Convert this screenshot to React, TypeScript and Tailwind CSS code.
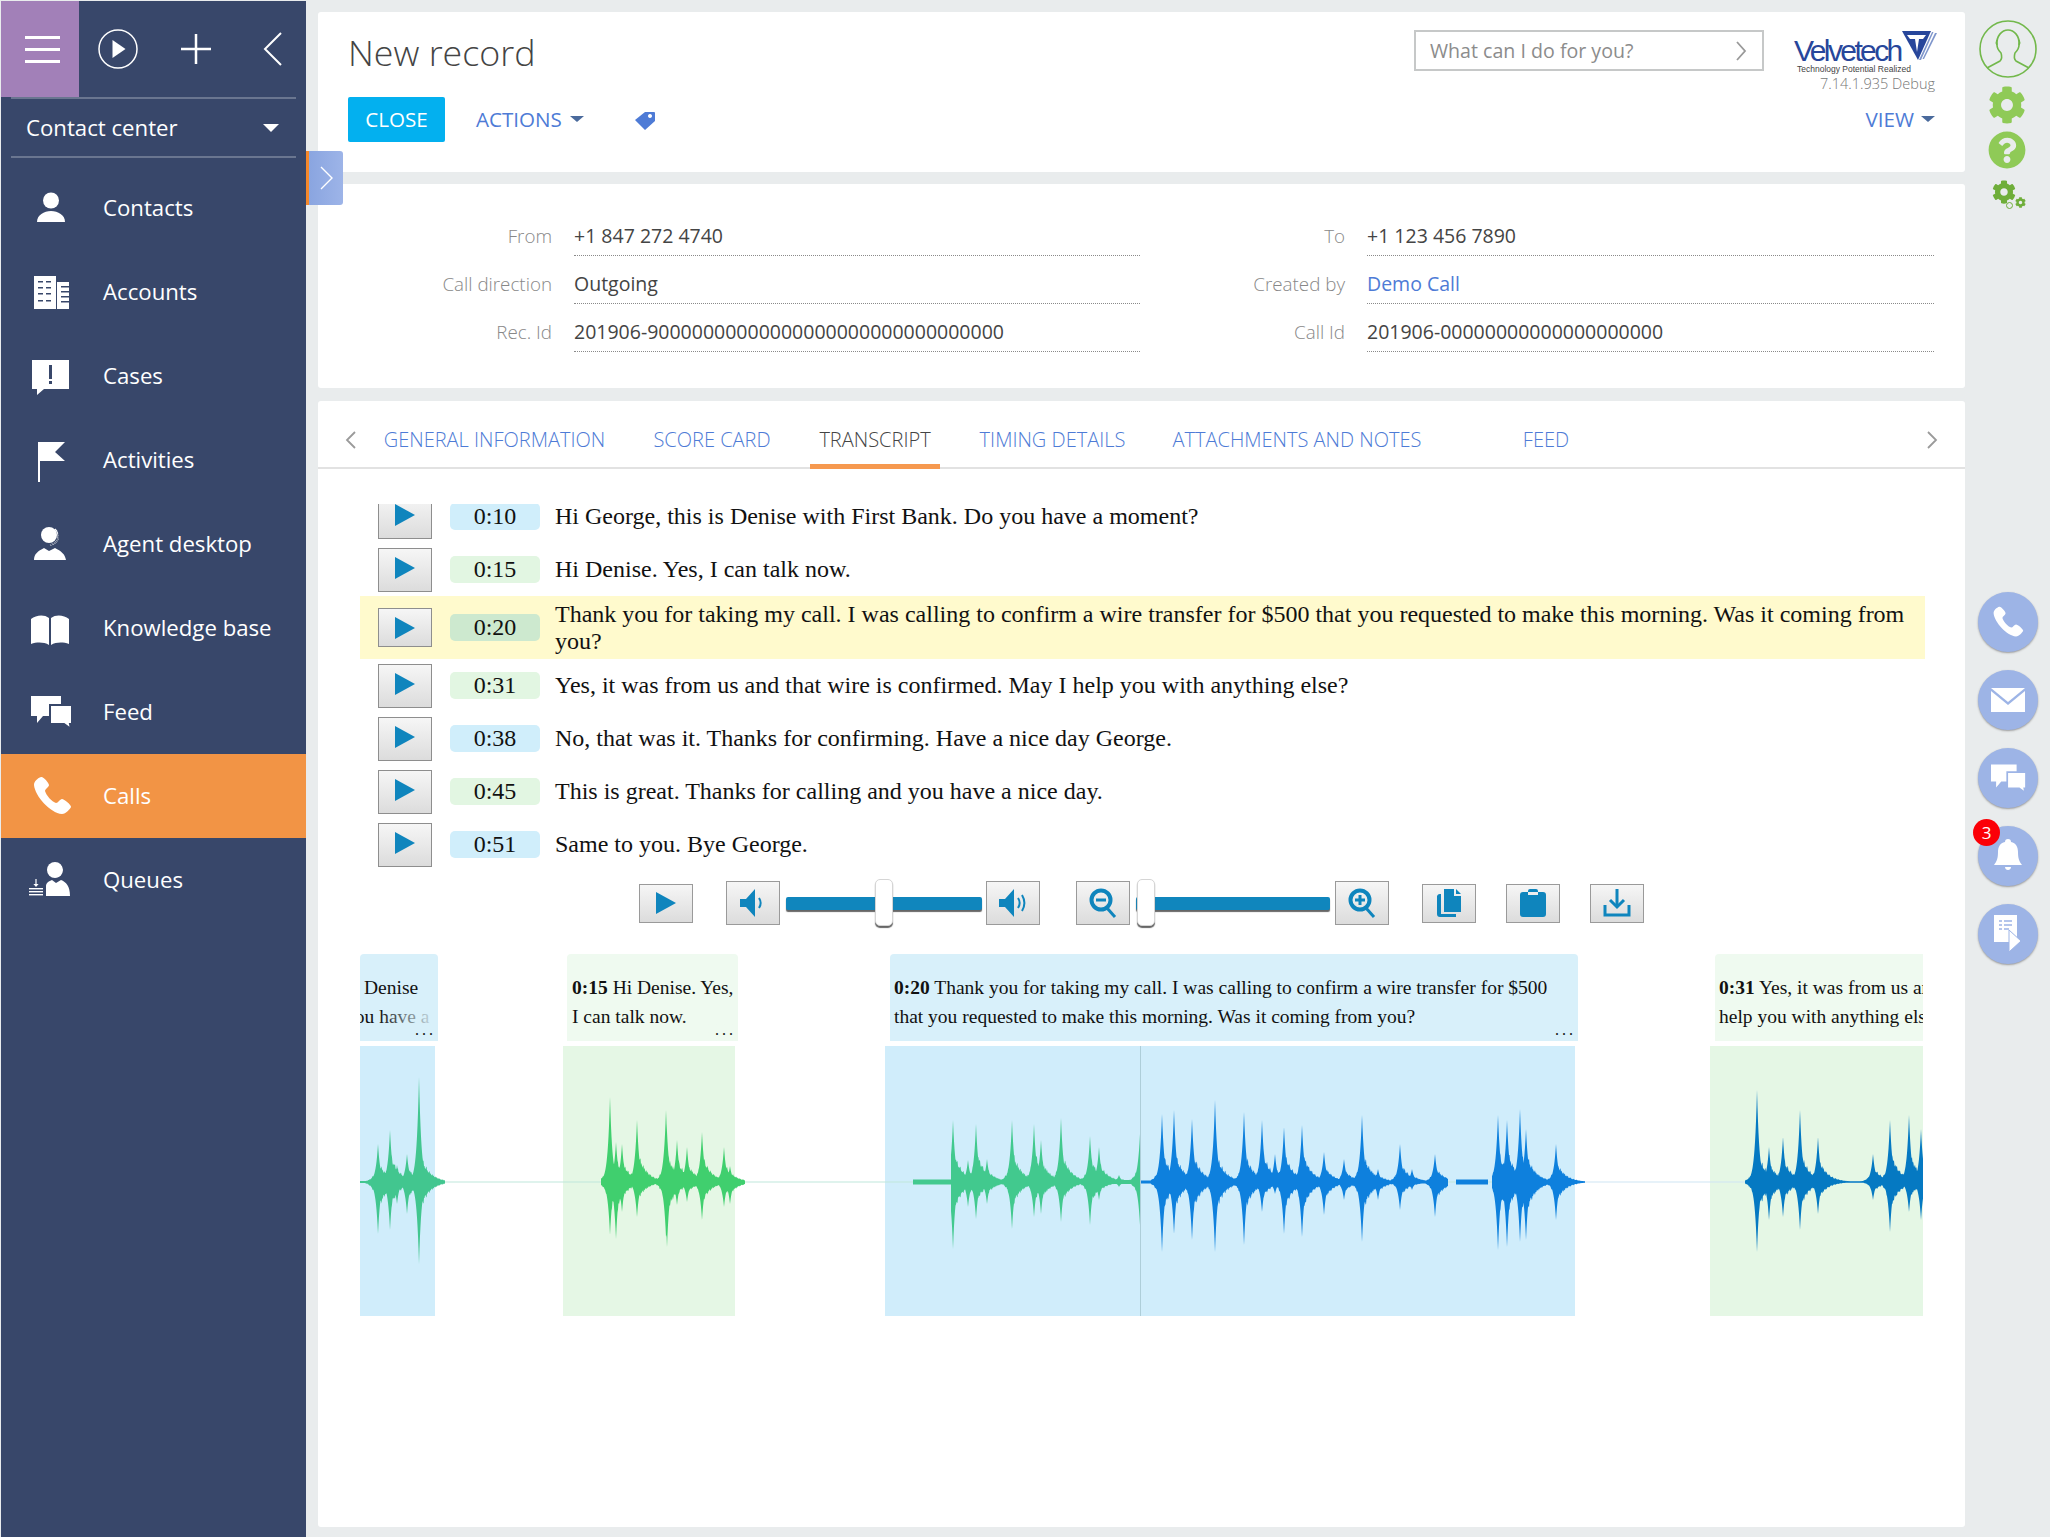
import React from "react";
import { FaCog, FaQuestionCircle } from "react-icons/fa";

type Peak = [number, number, number];

type WaveSegment = {
    from: number;
    to: number;
    color: string;
    floor: number;
    peaks: Peak[];
};

// center line of the wave on the page
const MID = 1182;

const waveSegments: WaveSegment[] = [
    {
        from: 360,
        to: 445,
        color: "#42c68f",
        floor: 1,
        peaks: [
            [378, 38, 52],
            [390, 52, 48],
            [397, 17, 22],
            [407, 28, 32],
            [419, 105, 82],
            [430, 8, 8],
        ],
    },
    {
        from: 601,
        to: 745,
        color: "#40cf6e",
        floor: 0.8,
        peaks: [
            [610, 85, 53],
            [616, 40, 57],
            [622, 38, 30],
            [637, 62, 35],
            [666, 72, 55],
            [667, 50, 65],
            [677, 42, 23],
            [687, 35, 20],
            [702, 50, 38],
            [724, 35, 25],
            [730, 16, 22],
        ],
    },
    { from: 913, to: 951, color: "#42c98e", floor: 2.5, peaks: [] },
    {
        from: 951,
        to: 1140,
        color: "#42c98e",
        floor: 2,
        peaks: [
            [953, 62, 67],
            [968, 22, 25],
            [976, 58, 37],
            [987, 23, 22],
            [1012, 62, 47],
            [1034, 58, 35],
            [1041, 42, 32],
            [1061, 64, 40],
            [1090, 46, 43],
            [1099, 35, 18],
            [1119, 7, 5],
            [1140, 48, 43],
        ],
    },
    {
        from: 1140,
        to: 1448,
        color: "#0e80dd",
        floor: 1.5,
        peaks: [
            [1162, 68, 70],
            [1174, 72, 52],
            [1192, 63, 58],
            [1215, 82, 70],
            [1244, 70, 63],
            [1262, 62, 30],
            [1275, 28, 12],
            [1284, 55, 52],
            [1302, 57, 55],
            [1324, 30, 33],
            [1344, 23, 18],
            [1362, 67, 60],
            [1378, 13, 18],
            [1400, 38, 28],
            [1412, 13, 8],
            [1435, 28, 35],
        ],
    },
    { from: 1456, to: 1488, color: "#0e80dd", floor: 2.5, peaks: [] },
    {
        from: 1492,
        to: 1585,
        color: "#0e80dd",
        floor: 0.8,
        peaks: [
            [1498, 67, 68],
            [1507, 62, 65],
            [1520, 73, 60],
            [1526, 53, 58],
            [1556, 38, 38],
        ],
    },
    {
        from: 1745,
        to: 1923,
        color: "#0579c2",
        floor: 0.8,
        peaks: [
            [1757, 92, 70],
            [1769, 35, 38],
            [1783, 45, 35],
            [1800, 72, 48],
            [1818, 45, 32],
            [1873, 28, 18],
            [1890, 62, 50],
            [1909, 67, 30],
            [1921, 53, 38],
        ],
    },
];

const wavePoints = (segment: WaveSegment) => {
    const upper: string[] = [];
    const lower: string[] = [];
    for (let x = segment.from; x <= segment.to; x += 0.5) {
        let up = segment.floor;
        let down = segment.floor;
        const noise = 0.72 + 0.28 * Math.abs(Math.sin(x * 5.3) * Math.cos(x * 2.1));
        for (const [px, peakUp, peakDown] of segment.peaks) {
            const d = Math.abs(x - px);
            const spike = Math.exp(-d / 2.4);
            const body = Math.exp(-d / (x < px ? 4 : 9));
            up = Math.max(up, peakUp * spike, Math.min(peakUp * 0.62, 36) * body * noise);
            down = Math.max(down, peakDown * spike, Math.min(peakDown * 0.62, 36) * body * noise);
        }
        upper.push(`${x},${(MID - up).toFixed(1)}`);
        lower.unshift(`${x},${(MID + down).toFixed(1)}`);
    }
    return [...upper, ...lower].join(" ");
};

const Waveform = () => (
    <svg
        className="absolute left-0 top-0"
        width="1563"
        height="270"
        viewBox="360 1046 1563 270"
    >
        <rect x="360" y="1181.5" width="1215" height="1" fill="#bfe8dc" />
        <rect x="1575" y="1181.5" width="348" height="1" fill="#cfe6f3" />
        {waveSegments.map((segment) => (
            <polygon
                key={segment.from}
                points={wavePoints(segment)}
                fill={segment.color}
            />
        ))}
        <rect x="1140" y="1046" width="1" height="270" fill="#aeced9" />
    </svg>
);

const PhoneIcon = ({ className }: { className?: string }) => (
    <svg className={className} viewBox="0 0 40 40" fill="#fff">
        <path d="M9 1C6 2 2 5 2 9c1 11 16 28 28 29 4 0 8-5 9-7 .5-2-7-8-9-8s-4 4-6 4c-4-1-10-8-11-12 0-2 4-4 4-6S11 0 9 1z" />
    </svg>
);

const ChatIcon = ({
    className,
    gap,
}: {
    className?: string;
    gap: string;
}) => (
    <svg className={className} viewBox="0 0 41 33" fill="#fff">
        <path d="M0 0h30v20H12l-6 7v-7H0z" />
        <path
            d="M19 9h22v19h-2l1 5-7-5H19z"
            stroke={gap}
            strokeWidth="2"
        />
    </svg>
);

const SIDE = "#38476a";

const ContactsIcon = () => (
    <svg className="h-[44px] w-[44px]" viewBox="0 0 44 44" fill="#fff">
        <circle cx="23" cy="14.5" r="8" />
        <path d="M9 36c0-7 7-11 14-11s14 4 14 11z" />
    </svg>
);

const AccountsIcon = () => (
    <svg className="h-[44px] w-[44px]" viewBox="0 0 44 44" fill="#fff">
        <rect x="6" y="6" width="22" height="33" />
        <rect x="29" y="12" width="12" height="27" />
        <g fill={SIDE}>
            <rect x="10" y="11" width="5" height="1.5" />
            <rect x="18" y="11" width="5" height="1.5" />
            <rect x="10" y="17" width="5" height="1.5" />
            <rect x="18" y="17" width="5" height="1.5" />
            <rect x="10" y="23" width="5" height="1.5" />
            <rect x="18" y="23" width="5" height="1.5" />
            <rect x="10" y="30" width="5" height="1.5" />
            <rect x="18" y="30" width="5" height="1.5" />
            <rect x="33" y="16" width="8" height="1.5" />
            <rect x="33" y="21" width="8" height="1.5" />
            <rect x="33" y="26" width="8" height="1.5" />
            <rect x="33" y="31" width="8" height="1.5" />
        </g>
    </svg>
);

const CasesIcon = () => (
    <svg className="h-[44px] w-[44px]" viewBox="0 0 44 44" fill="#fff">
        <path d="M4 6h37v29H16l-7 6v-6H4z" />
        <rect x="21" y="11" width="3" height="14" fill={SIDE} />
        <rect x="21" y="27" width="3" height="3" fill={SIDE} />
    </svg>
);

const ActivitiesIcon = () => (
    <svg className="h-[44px] w-[44px]" viewBox="0 0 44 44" fill="#fff">
        <rect x="10" y="4" width="2" height="40" />
        <path d="M10 4h27l-10 10 10 9H10z" />
    </svg>
);

const AgentIcon = () => (
    <svg className="h-[44px] w-[44px]" viewBox="0 0 44 44" fill="#fff">
        <circle cx="21" cy="13" r="8" />
        <path d="M6 38c0-6 4-9 10-12l5 3 6-3c6 3 10 6 11 12z" />
        <path
            d="M27 7c3 3 4 6 3 10-1 3-4 5-8 6"
            fill="none"
            stroke="#fff"
            strokeWidth="1.3"
        />
        <path
            d="M30 9c1 3 1 6 0 8-1 3-4 5-8 6"
            fill="none"
            stroke={SIDE}
            strokeWidth="1"
        />
    </svg>
);

const BookIcon = () => (
    <svg className="h-[44px] w-[44px]" viewBox="0 0 44 44" fill="#fff">
        <path d="M3 13c5-4 13-5 18-1v27c-5-3-12-3-18-1z" />
        <path d="M23 12c5-4 13-3 18 1v25c-6-2-13-2-18 1z" />
    </svg>
);

const QueuesIcon = () => (
    <svg className="h-[44px] w-[44px]" viewBox="0 0 44 44" fill="#fff">
        <circle cx="27" cy="12" r="8" />
        <path d="M18 38V28c0-3 3-5 6-6l4 3 5-3c5 2 9 6 9 16z" />
        <path
            d="M33 6c3 3 3 7 2 10-1 3-4 4-8 5"
            fill="none"
            stroke={SIDE}
            strokeWidth="1"
        />
        <rect x="1" y="30" width="14" height="1.4" />
        <rect x="1" y="33" width="14" height="1.4" />
        <rect x="1" y="36" width="14" height="1.4" />
        <path d="M7.4 21h1.2v5h2l-2.6 3-2.6-3h2z" />
    </svg>
);

const menuItems = [
    { label: "Contacts", icon: <ContactsIcon /> },
    { label: "Accounts", icon: <AccountsIcon /> },
    { label: "Cases", icon: <CasesIcon /> },
    { label: "Activities", icon: <ActivitiesIcon /> },
    { label: "Agent desktop", icon: <AgentIcon /> },
    { label: "Knowledge base", icon: <BookIcon /> },
    {
        label: "Feed",
        icon: (
            <div className="flex h-[44px] w-[44px] items-center pl-[3px]">
                <ChatIcon className="h-[33px] w-[41px]" gap={SIDE} />
            </div>
        ),
    },
    {
        label: "Calls",
        active: true,
        icon: (
            <div className="flex h-[44px] w-[44px] items-center pl-[4px]">
                <PhoneIcon className="h-[40px] w-[40px]" />
            </div>
        ),
    },
    { label: "Queues", icon: <QueuesIcon /> },
];

const Sidebar = () => (
    <div className="ml-[1px] mt-[1px] flex w-[305px] shrink-0 flex-col bg-[#38476a]">
        <div className="flex h-[96px] items-center">
            <div className="flex h-[96px] w-[78px] flex-col items-center justify-center gap-[9px] bg-[#a280b8] pl-[4px]">
                <div className="h-[3px] w-[35px] bg-white" />
                <div className="h-[3px] w-[35px] bg-white" />
                <div className="h-[3px] w-[35px] bg-white" />
            </div>
            <svg className="ml-[19px] h-[40px] w-[40px]" viewBox="0 0 40 40">
                <circle cx="20" cy="20" r="19" fill="none" stroke="#fff" strokeWidth="1.5" />
                <path d="M14.5 11l13 9-13 9z" fill="#fff" />
            </svg>
            <svg className="ml-[42px] h-[32px] w-[32px]" viewBox="0 0 32 32">
                <path d="M16 1v30M1 16h30" stroke="#fff" strokeWidth="2.5" />
            </svg>
            <svg className="ml-[51px] h-[34px] w-[20px]" viewBox="0 0 20 34">
                <path d="M18 1L2 17l16 16" fill="none" stroke="#fff" strokeWidth="2" />
            </svg>
        </div>
        <div className="mx-[10px] flex h-[61px] items-center justify-between border-y-2 border-[#6a7690] pl-[15px] pr-[17px] font-['Open_Sans',sans-serif] text-[22.2px] text-white">
            <span>Contact center</span>
            <span className="h-0 w-0 border-x-[8.5px] border-t-[8px] border-x-transparent border-t-white" />
        </div>
        <div className="mt-[8px] flex flex-col">
            {menuItems.map((item) => (
                <div
                    key={item.label}
                    className={`flex h-[84px] items-center pl-[27px] font-['Open_Sans',sans-serif] text-[22.2px] text-white ${item.active ? "bg-[#f29445]" : ""}`}
                >
                    <div className="w-[75px]">{item.icon}</div>
                    {item.label}
                </div>
            ))}
        </div>
    </div>
);

const Caret = () => (
    <span className="h-0 w-0 border-x-[7px] border-t-[6px] border-x-transparent border-t-[#4a6a9c]" />
);

const Logo = () => (
    <div className="ml-[30px] flex w-[143px] flex-col items-end pt-[23px]">
        <div className="flex h-[30px] w-full items-center">
            <span className="font-['Liberation_Sans',sans-serif] text-[30px] tracking-[-2.6px] text-[#27469b]">
                Velvetech
            </span>
            <svg className="-mt-[8px] ml-auto h-[30px] w-[35px]" viewBox="0 0 35 30">
                <path d="M0 0h29L16 29z" fill="#27469b" />
                <path d="M5 4h19l-3 4h-4l-2 13-2-13H8z" fill="#fff" />
                <path d="M30 1h1.5L19 29h-2zM33 2h2L22 28h-1.5z" fill="#7f96cc" />
            </svg>
        </div>
        <div className="w-full whitespace-nowrap pl-[3px] font-['Liberation_Sans',sans-serif] text-[8.5px] leading-[9px] text-[#444]">
            Technology Potential Realized
        </div>
        <div className="whitespace-nowrap pr-[2px] font-['Open_Sans',sans-serif] text-[14.5px] font-light leading-[19px] text-[#777]">
            7.14.1.935 Debug
        </div>
    </div>
);

const HeaderCard = () => (
    <div className="mt-[12px] h-[160px] rounded-[3px] bg-white font-['Open_Sans',sans-serif]">
        <div className="flex h-[85px] justify-between pr-[28px]">
            <div className="pl-[30px] pt-[14px] text-[35.8px] font-light leading-[52px] text-[#444]">
                New record
            </div>
            <div className="flex">
                <div className="mt-[18px] flex h-[41px] w-[350px] items-center justify-between border-2 border-[#c6c8c8] pl-[14px] pr-[15px] text-[19.6px] text-[#8c8c8c]">
                    What can I do for you?
                    <svg className="h-[20px] w-[12px]" viewBox="0 0 12 20">
                        <path d="M2 1l8 9-8 9" fill="none" stroke="#999" strokeWidth="1.8" />
                    </svg>
                </div>
                <Logo />
            </div>
        </div>
        <div className="flex h-[45px] items-center pl-[30px] pr-[30px] text-[20.6px] text-[#4e7bd6]">
            <div className="flex h-[45px] w-[97px] items-center justify-center rounded-[2px] bg-[#03b0ef] text-white">
                CLOSE
            </div>
            <div className="ml-[31px] flex items-center gap-[8px]">
                ACTIONS
                <Caret />
            </div>
            <svg className="ml-[51px] h-[20px] w-[20px]" viewBox="0 0 20 20" fill="#4e7bd6">
                <path
                    fillRule="evenodd"
                    d="M10 2h9a1 1 0 0 1 1 1v8L10 20 0 10zM15 4a2 2 0 1 0 .01 0z"
                />
            </svg>
            <div className="ml-auto flex items-center gap-[7px]">
                VIEW
                <Caret />
            </div>
        </div>
    </div>
);

const Field = ({
    label,
    value,
    link,
    labelWidth,
    right,
}: {
    label: string;
    value: string;
    link?: boolean;
    labelWidth: string;
    right?: boolean;
}) => (
    <div className="flex h-[48px]">
        <div className={`${labelWidth} flex h-[44px] items-center justify-end pt-[5px] text-[18.8px] font-light text-[#888]`}>
            {label}
        </div>
        <div
            className={`ml-[22px] flex h-[44px] flex-1 items-center border-b border-dotted border-[#8a8a8a] pt-[5px] text-[19.5px] ${link ? "text-[#4e7bd6]" : "text-[#444]"} ${right ? "mr-[31px]" : ""}`}
        >
            {value}
        </div>
    </div>
);

const DetailsCard = () => (
    <div className="mt-[12px] grid h-[204px] grid-cols-[822px_1fr] rounded-[3px] bg-white pt-[28px] font-['Open_Sans',sans-serif]">
        <div>
            <Field label="From" value="+1 847 272 4740" labelWidth="w-[234px]" />
            <Field label="Call direction" value="Outgoing" labelWidth="w-[234px]" />
            <Field
                label="Rec. Id"
                value="201906-90000000000000000000000000000000"
                labelWidth="w-[234px]"
            />
        </div>
        <div>
            <Field label="To" value="+1 123 456 7890" labelWidth="w-[205px]" right />
            <Field label="Created by" value="Demo Call" link labelWidth="w-[205px]" right />
            <Field
                label="Call Id"
                value="201906-00000000000000000000"
                labelWidth="w-[205px]"
                right
            />
        </div>
    </div>
);

const tabs = [
    { label: "GENERAL INFORMATION", width: "w-[239px]" },
    { label: "SCORE CARD", width: "w-[196px]" },
    { label: "TRANSCRIPT", width: "w-[130px]", active: true },
    { label: "TIMING DETAILS", width: "w-[225px]" },
    { label: "ATTACHMENTS AND NOTES", width: "w-[264px]" },
    { label: "FEED", width: "w-[234px]" },
];

const TabBar = () => (
    <div className="flex h-[68px] items-stretch border-b-2 border-[#e2e2e2] pl-[27px] pr-[27px] font-['Open_Sans',sans-serif] text-[20px] font-light">
        <div className="flex w-[30px] items-center">
            <svg className="mt-[12px] h-[18px] w-[12px]" viewBox="0 0 12 18">
                <path d="M10 1L2 9l8 8" fill="none" stroke="#9a9a9a" strokeWidth="1.8" />
            </svg>
        </div>
        {tabs.map((tab) => (
            <div
                key={tab.label}
                className={`${tab.width} -mb-[2px] flex shrink-0 items-center justify-center whitespace-nowrap border-b-[5px] pt-[14px] ${tab.active ? "border-[#f6994f] text-[#444]" : "border-transparent text-[#4e7bd6]"}`}
            >
                {tab.label}
            </div>
        ))}
        <div className="ml-auto flex items-center">
            <svg className="mt-[12px] h-[18px] w-[12px]" viewBox="0 0 12 18">
                <path d="M2 1l8 8-8 8" fill="none" stroke="#9a9a9a" strokeWidth="1.8" />
            </svg>
        </div>
    </div>
);

const PlayTriangle = () => (
    <svg className="h-[22px] w-[20px]" viewBox="0 0 20 22">
        <path d="M0 0l20 11L0 22z" fill="#0f85bd" />
    </svg>
);

const transcript = [
    { time: "0:10", kind: "blue", text: "Hi George, this is Denise with First Bank. Do you have a moment?" },
    { time: "0:15", kind: "green", text: "Hi Denise. Yes, I can talk now." },
    {
        time: "0:20",
        kind: "current",
        text: "Thank you for taking my call. I was calling to confirm a wire transfer for $500 that you requested to make this morning. Was it coming from you?",
    },
    { time: "0:31", kind: "green", text: "Yes, it was from us and that wire is confirmed. May I help you with anything else?" },
    { time: "0:38", kind: "blue", text: "No, that was it. Thanks for confirming. Have a nice day George." },
    { time: "0:45", kind: "green", text: "This is great. Thanks for calling and you have a nice day." },
    { time: "0:51", kind: "blue", text: "Same to you. Bye George." },
];

const TranscriptRow = ({ time, kind, text }: { time: string; kind: string; text: string }) => {
    const current = kind === "current";
    let badge = "bg-[#d0eefb]";
    if (kind === "green") badge = "bg-[#e2f6e2]";
    if (current) badge = "bg-[#cde9cf]";
    return (
        <div className={`flex items-center pl-[18px] pr-[15px] ${current ? "h-[63px] bg-[#fffacd]" : "h-[53px]"}`}>
            <div
                className={`flex w-[54px] shrink-0 justify-center border border-[#8e8e8e] bg-gradient-to-b from-[#f6f6f6] to-[#dcdcdc] pt-[8px] ${current ? "h-[39px]" : "h-[44px]"}`}
            >
                <PlayTriangle />
            </div>
            <div className={`ml-[18px] flex h-[27px] w-[90px] shrink-0 items-center justify-center rounded-[5px] pb-[2px] ${badge}`}>
                {time}
            </div>
            <div className="ml-[15px] leading-[27px]">{text}</div>
        </div>
    );
};

const ToolButton = ({
    children,
    tall,
    className = "",
}: {
    children: React.ReactNode;
    tall?: boolean;
    className?: string;
}) => (
    <div
        className={`flex w-[54px] shrink-0 items-center justify-center border border-[#9a9a9a] bg-gradient-to-b from-[#f6f6f6] to-[#dcdcdc] ${tall ? "h-[44px]" : "h-[39px]"} ${className}`}
    >
        {children}
    </div>
);

const Slider = ({ width, handle, className = "" }: { width: string; handle: string; className?: string }) => (
    <div className={`relative h-[13px] rounded-[2px] bg-[#1086bd] shadow-[0_2px_1px_#666] ${width} ${className}`}>
        <div
            className={`absolute -top-[18px] h-[47px] w-[18px] rounded-[5px] border border-[#d5d5d5] bg-white shadow-[0_2px_1px_#666] ${handle}`}
        />
    </div>
);

const Toolbar = () => (
    <div className="mt-[6px] flex h-[52px] items-center pl-[279px]">
        <ToolButton>
            <PlayTriangle />
        </ToolButton>
        <ToolButton tall className="ml-[33px] pr-[3px]">
            <svg className="h-[28px] w-[26px]" viewBox="0 0 26 28" fill="#0f85bd">
                <path d="M1 10h6l9-10v28l-9-10H1z" />
                <path d="M20 9c2 3 2 7 0 10" fill="none" stroke="#0f85bd" strokeWidth="2" />
            </svg>
        </ToolButton>
        <Slider width="w-[196px]" handle="left-[89px]" className="ml-[6px]" />
        <ToolButton tall className="ml-[4px]">
            <svg className="h-[28px] w-[30px]" viewBox="0 0 30 28" fill="#0f85bd">
                <path d="M1 10h6l9-10v28l-9-10H1z" />
                <path d="M20 9c2 3 2 7 0 10M24 6c3 5 3 11 0 16" fill="none" stroke="#0f85bd" strokeWidth="2" />
            </svg>
        </ToolButton>
        <ToolButton tall className="ml-[36px]">
            <svg className="h-[30px] w-[28px]" viewBox="0 0 28 30">
                <circle cx="12" cy="12" r="9.5" fill="none" stroke="#0f85bd" strokeWidth="4" />
                <path d="M7 12h10" stroke="#0f85bd" strokeWidth="3" />
                <path d="M18 20l8 9" stroke="#0f85bd" strokeWidth="3" />
            </svg>
        </ToolButton>
        <Slider width="w-[194px]" handle="left-[1px]" className="ml-[6px]" />
        <ToolButton tall className="ml-[5px]">
            <svg className="h-[30px] w-[28px]" viewBox="0 0 28 30">
                <circle cx="12" cy="12" r="9.5" fill="none" stroke="#0f85bd" strokeWidth="4" />
                <path d="M7 12h10M12 7v10" stroke="#0f85bd" strokeWidth="3" />
                <path d="M18 20l8 9" stroke="#0f85bd" strokeWidth="3" />
            </svg>
        </ToolButton>
        <ToolButton className="ml-[33px]">
            <svg className="h-[28px] w-[24px]" viewBox="0 0 24 28" fill="#0f85bd">
                <path d="M7 0h10v7h7v16H7z" />
                <path d="M19 0l5 5h-5z" />
                <path d="M4 5v20h15v3H3a3 3 0 0 1-3-3V7a3 3 0 0 1 3-2z" />
            </svg>
        </ToolButton>
        <ToolButton className="ml-[30px]">
            <svg className="h-[28px] w-[26px]" viewBox="0 0 26 28" fill="#0f85bd">
                <path d="M3 3h5V2a2 2 0 0 1 2-2h6a2 2 0 0 1 2 2v1h5a3 3 0 0 1 3 3v19a3 3 0 0 1-3 3H3a3 3 0 0 1-3-3V6a3 3 0 0 1 3-3z" />
                <rect x="8" y="3" width="10" height="3" fill="#eee" />
            </svg>
        </ToolButton>
        <ToolButton className="ml-[30px]">
            <svg className="h-[28px] w-[28px]" viewBox="0 0 28 28" fill="none" stroke="#0f85bd" strokeWidth="3">
                <path d="M14 0v17" />
                <path d="M7 11l7 7 7-7" />
                <path d="M2 16v10h24V16" />
            </svg>
        </ToolButton>
    </div>
);

const Dots = ({ fade }: { fade: string }) => (
    <div className={`absolute bottom-0 right-0 flex h-[29px] w-[60px] items-end justify-end bg-gradient-to-r from-transparent pb-[3px] pr-[2px] text-[16px] leading-[16px] tracking-[3px] ${fade}`}>
        ...
    </div>
);

const TextBoxes = () => (
    <div className="mt-[25px] flex h-[87px] text-[19.5px] leading-[29px] text-[#111]">
        <div className="relative w-[78px] shrink-0 overflow-hidden rounded-t-[4px] bg-[#d8f0fa] pl-[4px] pt-[19px]">
            <div className="whitespace-nowrap">Denise</div>
            <div className="-ml-[19px] whitespace-nowrap">you have a</div>
            <Dots fade="to-[#d8f0fa]" />
        </div>
        <div className="relative ml-[129px] w-[171px] shrink-0 overflow-hidden rounded-t-[4px] bg-[#effaf0] pl-[5px] pt-[19px]">
            <div className="whitespace-nowrap">
                <b>0:15</b> Hi Denise. Yes,
            </div>
            <div className="whitespace-nowrap">I can talk now.</div>
            <Dots fade="to-[#effaf0]" />
        </div>
        <div className="relative ml-[152px] w-[688px] shrink-0 overflow-hidden rounded-t-[4px] bg-[#d8f0fa] pl-[4px] pt-[19px]">
            <div className="whitespace-nowrap">
                <b>0:20</b> Thank you for taking my call. I was calling to confirm a wire transfer for $500
            </div>
            <div className="whitespace-nowrap">that you requested to make this morning. Was it coming from you?</div>
            <Dots fade="to-[#d8f0fa]" />
        </div>
        <div className="relative ml-[137px] w-[208px] shrink-0 overflow-hidden rounded-tl-[4px] bg-[#effaf0] pl-[4px] pt-[19px]">
            <div className="whitespace-nowrap">
                <b>0:31</b> Yes, it was from us and that wire is confirmed.
            </div>
            <div className="whitespace-nowrap">help you with anything else?</div>
        </div>
    </div>
);

const WaveRegions = () => (
    <div className="relative mt-[5px] flex h-[270px] w-[1563px]">
        <div className="w-[75px] shrink-0 bg-[#d0edfb]" />
        <div className="ml-[128px] w-[172px] shrink-0 bg-[#e5f7e5]" />
        <div className="ml-[150px] w-[690px] shrink-0 bg-[#d0edfb]" />
        <div className="ml-[135px] w-[213px] shrink-0 bg-[#e5f7e5]" />
        <Waveform />
    </div>
);

const TranscriptCard = () => (
    <div className="mt-[13px] h-[1126px] rounded-[3px] bg-white">
        <TabBar />
        <div className="pl-[42px] pr-[40px] font-['Liberation_Serif',serif] text-[24px] text-[#111]">
            <div className="mt-[35px] h-[367px] overflow-hidden">
                <div className="-mt-[14px]">
                    {transcript.map((row) => (
                        <TranscriptRow key={row.time} {...row} />
                    ))}
                </div>
            </div>
            <Toolbar />
            <TextBoxes />
            <WaveRegions />
        </div>
    </div>
);

const RoundButton = ({ children, badge }: { children: React.ReactNode; badge?: string }) => (
    <div className="relative flex h-[60px] w-[60px] items-center justify-center rounded-full bg-[#9db4e6] shadow-[0_1px_2px_#999]">
        {children}
        {badge && (
            <div className="absolute -left-[5px] -top-[7px] flex h-[27px] w-[27px] items-center justify-center rounded-full bg-[#fb0007] font-['Open_Sans',sans-serif] text-[17px] text-white">
                {badge}
            </div>
        )}
    </div>
);

const RightRail = () => (
    <div className="flex w-[85px] shrink-0 flex-col pl-[13px]">
        <svg className="ml-[1px] mt-[20px] h-[58px] w-[58px]" viewBox="0 0 58 58" fill="none" stroke="#72b84b" strokeWidth="1.6">
            <ellipse cx="29" cy="29" rx="28" ry="28" />
            <path d="M8 48l13-7c2-2 2-5 1-8-3-3-4-5-4-8-1-9 5-15 11-15s12 6 11 15c0 3-1 5-4 8-1 3-1 6 1 8l13 7" />
            <path d="M18 25c-1-2-1-3 0-5M40 25c1-2 1-3 0-5" />
        </svg>
        <FaCog className="ml-[10px] mt-[8px] h-[38px] w-[38px] text-[#8fca57]" />
        <FaQuestionCircle className="ml-[10px] mt-[7px] h-[38px] w-[38px] text-[#8fca57]" />
        <div className="relative ml-[14px] mt-[11px] h-[29px] w-[34px] text-[#6fae3a]">
            <FaCog className="h-[24px] w-[24px]" />
            <FaCog className="absolute bottom-[1px] right-0 h-[11px] w-[11px]" />
            <div className="absolute bottom-0 left-[14px] h-[7px] w-[7px] rounded-full border-[1.5px] border-[#6fae3a]" />
        </div>
        <div className="mt-[383px] flex flex-col gap-[18px]">
            <RoundButton>
                <PhoneIcon className="h-[32px] w-[32px]" />
            </RoundButton>
            <RoundButton>
                <svg className="h-[24px] w-[34px]" viewBox="0 0 34 24" fill="#fff">
                    <path d="M0 0l17 14L34 0z" />
                    <path d="M0 3v21h34V3L17 17z" />
                </svg>
            </RoundButton>
            <RoundButton>
                <ChatIcon className="h-[29px] w-[35px]" gap="#9db4e6" />
            </RoundButton>
            <RoundButton badge="3">
                <svg className="h-[34px] w-[28px]" viewBox="0 0 28 34" fill="#fff">
                    <path d="M14 0c2 0 3 1 3 3 5 1 7 5 7 10 0 6 1 9 4 13H0c3-4 4-7 4-13 0-5 2-9 7-10 0-2 1-3 3-3z" />
                    <path d="M11 28h6c0 4-6 4-6 0z" />
                </svg>
            </RoundButton>
            <RoundButton>
                <svg className="h-[38px] w-[28px]" viewBox="0 0 28 38">
                    <path d="M0 0h23v27H0z" fill="#fff" />
                    <path d="M5 6h3M10 6h8M5 10h3M10 10h8M5 14h3M10 14h5" stroke="#9db4e6" strokeWidth="1.5" />
                    <path d="M15 15l12 11-12 11z" fill="#fff" stroke="#9db4e6" strokeWidth="1" />
                </svg>
            </RoundButton>
        </div>
    </div>
);

const App = () => (
    <div className="relative flex h-[1537px] w-[2050px] overflow-hidden bg-[#e9eced]">
        <Sidebar />
        <div className="absolute left-[306px] top-[151px] flex h-[54px] w-[37px] items-center rounded-r-[3px] border-l-[3px] border-[#f5882b] bg-gradient-to-r from-[#8aa5e0] to-[#9db4e8] pl-[11px]">
            <svg className="h-[24px] w-[14px]" viewBox="0 0 14 24">
                <path d="M1 1l11 11L1 23" fill="none" stroke="#fff" strokeWidth="1.4" />
            </svg>
        </div>
        <div className="ml-[12px] flex w-[1647px] shrink-0 flex-col">
            <HeaderCard />
            <DetailsCard />
            <TranscriptCard />
        </div>
        <RightRail />
    </div>
);

export default App;
